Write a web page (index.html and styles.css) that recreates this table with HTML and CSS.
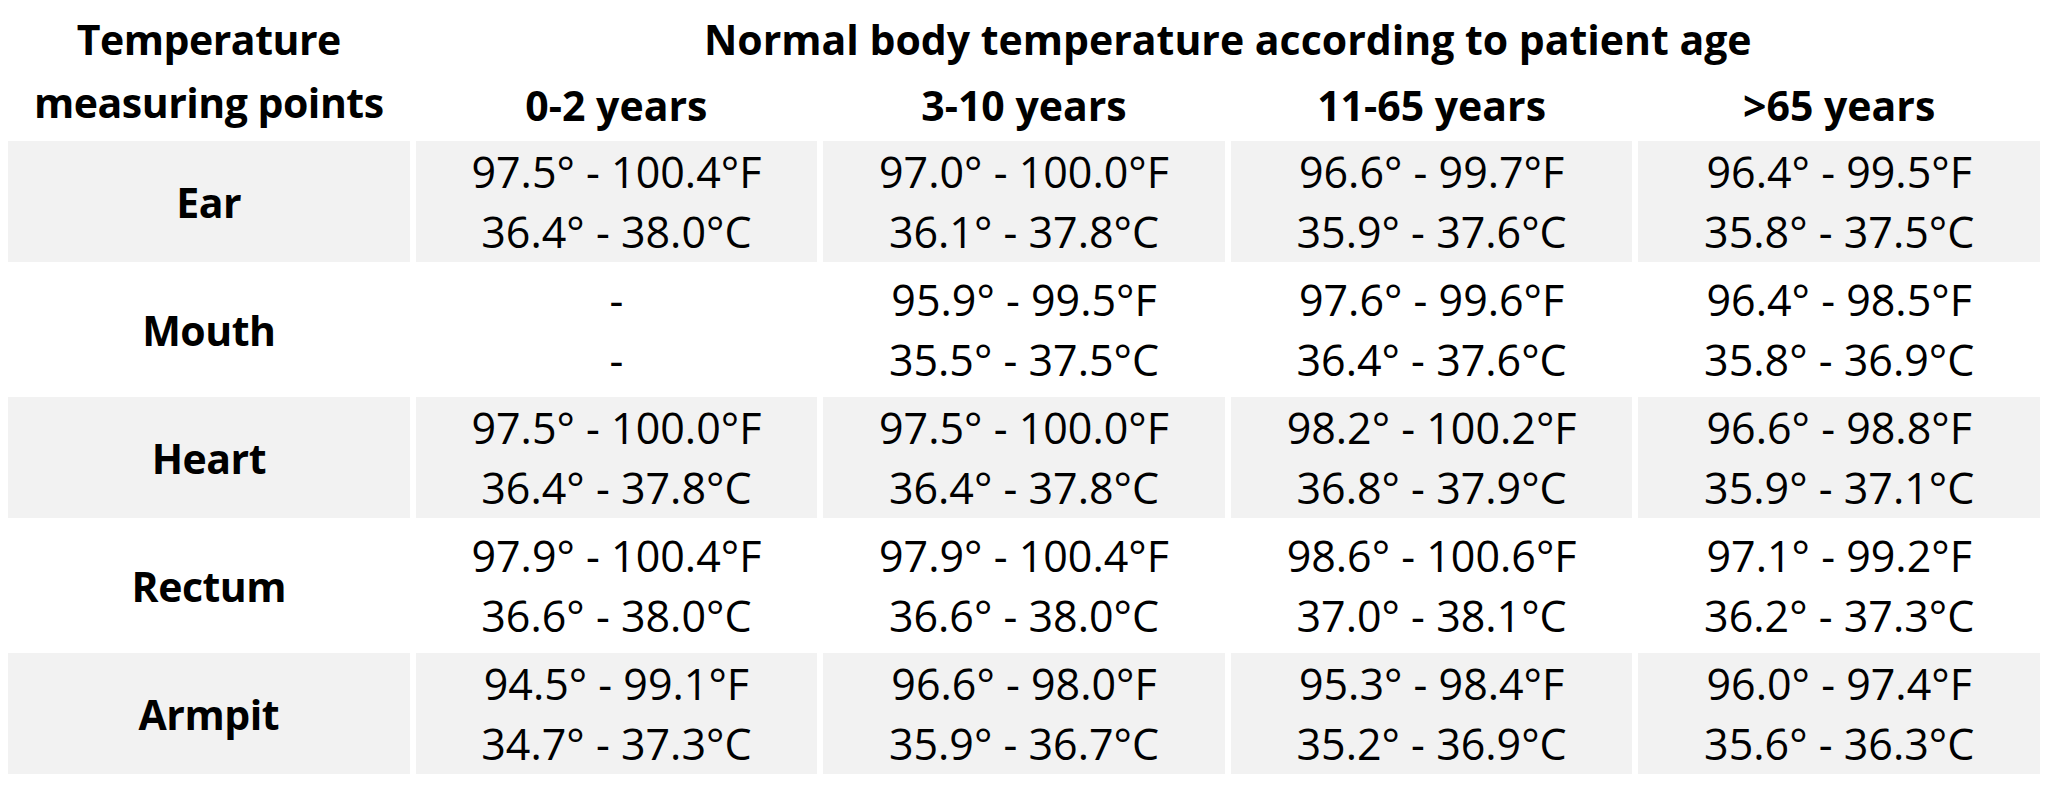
FILE: index.html
```html
<!DOCTYPE html>
<html lang="en">
<head>
<meta charset="utf-8">
<title>Normal body temperature</title>
<link rel="stylesheet" href="styles.css">
</head>
<body>
<div class="table">
  <div class="hcell corner">Temperature<br>measuring points</div>
  <div class="hcell title">Normal body temperature according to patient age</div>
  <div class="hcell age">0-2 years</div>
  <div class="hcell age">3-10 years</div>
  <div class="hcell age">11-65 years</div>
  <div class="hcell age">&gt;65 years</div>

  <div class="cell label shade">Ear</div>
  <div class="cell shade">97.5° - 100.4°F<br>36.4° - 38.0°C</div>
  <div class="cell shade">97.0° - 100.0°F<br>36.1° - 37.8°C</div>
  <div class="cell shade">96.6° - 99.7°F<br>35.9° - 37.6°C</div>
  <div class="cell shade">96.4° - 99.5°F<br>35.8° - 37.5°C</div>

  <div class="cell label">Mouth</div>
  <div class="cell">-<br>-</div>
  <div class="cell">95.9° - 99.5°F<br>35.5° - 37.5°C</div>
  <div class="cell">97.6° - 99.6°F<br>36.4° - 37.6°C</div>
  <div class="cell">96.4° - 98.5°F<br>35.8° - 36.9°C</div>

  <div class="cell label shade">Heart</div>
  <div class="cell shade">97.5° - 100.0°F<br>36.4° - 37.8°C</div>
  <div class="cell shade">97.5° - 100.0°F<br>36.4° - 37.8°C</div>
  <div class="cell shade">98.2° - 100.2°F<br>36.8° - 37.9°C</div>
  <div class="cell shade">96.6° - 98.8°F<br>35.9° - 37.1°C</div>

  <div class="cell label">Rectum</div>
  <div class="cell">97.9° - 100.4°F<br>36.6° - 38.0°C</div>
  <div class="cell">97.9° - 100.4°F<br>36.6° - 38.0°C</div>
  <div class="cell">98.6° - 100.6°F<br>37.0° - 38.1°C</div>
  <div class="cell">97.1° - 99.2°F<br>36.2° - 37.3°C</div>

  <div class="cell label shade">Armpit</div>
  <div class="cell shade">94.5° - 99.1°F<br>34.7° - 37.3°C</div>
  <div class="cell shade">96.6° - 98.0°F<br>35.9° - 36.7°C</div>
  <div class="cell shade">95.3° - 98.4°F<br>35.2° - 36.9°C</div>
  <div class="cell shade">96.0° - 97.4°F<br>35.6° - 36.3°C</div>
</div>
</body>
</html>
```

FILE: styles.css
```css
html, body {
  margin: 0;
  padding: 0;
  background: #ffffff;
}

body {
  padding: 8px;
  font-family: "Open Sans", "Liberation Sans", sans-serif;
  color: #000000;
}

.table {
  display: grid;
  grid-template-columns: repeat(5, 1fr);
  grid-template-rows: 61px 58px repeat(5, 121px);
  column-gap: 6px;
  row-gap: 7px;
}

.hcell {
  display: flex;
  align-items: center;
  justify-content: center;
  text-align: center;
  font-weight: 700;
  font-size: 41px;
}

.corner {
  grid-column: 1;
  grid-row: 1 / span 2;
  line-height: 63px;
  letter-spacing: -0.5px;
}

.title {
  grid-column: 2 / span 4;
  grid-row: 1;
}

.age {
  grid-row: 2;
}

.cell {
  display: flex;
  align-items: center;
  justify-content: center;
  text-align: center;
  font-size: 43px;
  line-height: 60px;
}

.shade {
  background: #f2f2f2;
}

.label {
  font-weight: 700;
  font-size: 41px;
  letter-spacing: -0.5px;
}
```
